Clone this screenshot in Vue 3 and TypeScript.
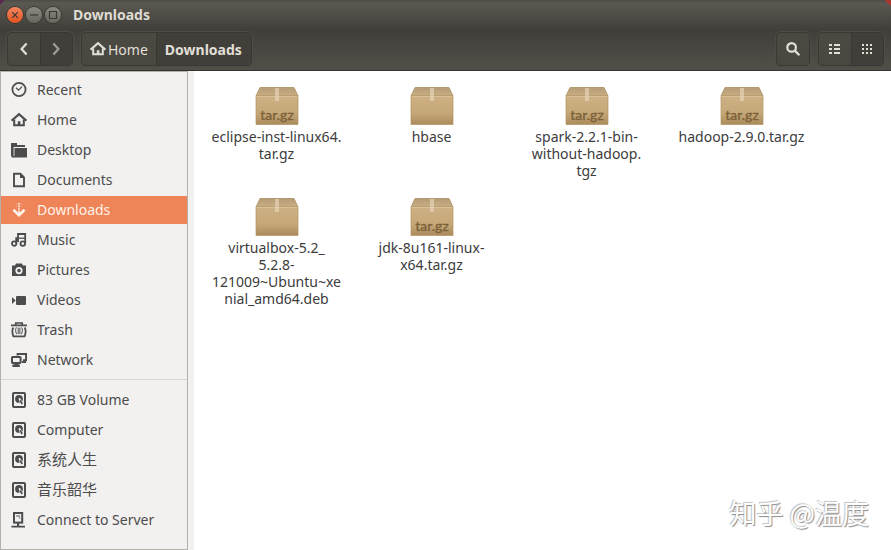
<script setup lang="ts">
import { ref } from 'vue'

interface Place {
  name: string
  icon: string
}

interface FileEntry {
  label: string
  badge?: string
}

const places: Place[] = [
  { name: 'Recent', icon: 'recent' },
  { name: 'Home', icon: 'home' },
  { name: 'Desktop', icon: 'desktop' },
  { name: 'Documents', icon: 'documents' },
  { name: 'Downloads', icon: 'downloads' },
  { name: 'Music', icon: 'music' },
  { name: 'Pictures', icon: 'pictures' },
  { name: 'Videos', icon: 'videos' },
  { name: 'Trash', icon: 'trash' },
  { name: 'Network', icon: 'network' },
]

const devices: Place[] = [
  { name: '83 GB Volume', icon: 'disk' },
  { name: 'Computer', icon: 'disk' },
  { name: '系统人生', icon: 'disk' },
  { name: '音乐韶华', icon: 'disk' },
  { name: 'Connect to Server', icon: 'server' },
]

const files: FileEntry[] = [
  { label: 'eclipse-inst-linux64.\ntar.gz', badge: 'tar.gz' },
  { label: 'hbase' },
  { label: 'spark-2.2.1-bin-\nwithout-hadoop.\ntgz', badge: 'tar.gz' },
  { label: 'hadoop-2.9.0.tar.gz', badge: 'tar.gz' },
  { label: 'virtualbox-5.2_\n5.2.8-\n121009~Ubuntu~xe\nnial_amd64.deb' },
  { label: 'jdk-8u161-linux-\nx64.tar.gz', badge: 'tar.gz' },
]

const groups: Place[][] = [places, devices]
const current = ref('Downloads')

const isHan = (text: string): boolean => /\p{Script=Han}/u.test(text)
</script>

<template>
  <div class="window">
    <svg class="defs" aria-hidden="true">
      <defs>
        <linearGradient id="box-front" x1="0" y1="0" x2="0" y2="1">
          <stop offset="0" stop-color="#cdb084" />
          <stop offset="0.6" stop-color="#c6a878" />
          <stop offset="1" stop-color="#ab8b5d" />
        </linearGradient>
        <linearGradient id="box-lid" x1="0" y1="0" x2="0" y2="1">
          <stop offset="0" stop-color="#b59c76" />
          <stop offset="1" stop-color="#c9ae84" />
        </linearGradient>
      </defs>
      <symbol id="recent" viewBox="0 0 16 16">
        <circle cx="8" cy="7.5" r="6.6" fill="none" stroke="currentColor" stroke-width="1.8" />
        <path d="M5 5.8 7.6 8.2 11 4.6" fill="none" stroke="currentColor" stroke-width="1.2" />
      </symbol>
      <symbol id="home" viewBox="0 0 16 16">
        <path d="M.6 8.6 8 2.2l7.4 6.4" fill="none" stroke="currentColor" stroke-width="2.1" />
        <path d="M3.2 7.5V13.2h9.6V7.5" fill="none" stroke="currentColor" stroke-width="2" />
        <path d="M6.8 9.2h2.6v4.6H6.8z" fill="currentColor" />
      </symbol>
      <symbol id="desktop" viewBox="0 0 16 16">
        <path d="M0 1h6v2h8v2H2.6v9H0z" fill="currentColor" />
        <path d="M3.4 6H16v9.6H.6V14h2.8z" fill="currentColor" />
      </symbol>
      <symbol id="documents" viewBox="0 0 16 16">
        <path d="M3 1.8h6.4L13 5.4v8.8H3z" fill="none" stroke="currentColor" stroke-width="1.9" />
        <path d="M9 2v4h4z" fill="currentColor" />
      </symbol>
      <symbol id="downloads" viewBox="0 0 16 16">
        <path d="M7.2 1h1.6v1.6H7.2zM7.2 3.6h1.6v1.6H7.2zM7.2 6.2h1.6v1.6H7.2zM7.2 8.6h1.6v4H7.2z" fill="currentColor" />
        <path d="M5.2 1h1v1.6h-1zM5.2 3.6h1v1.6h-1zM9.8 1h1v1.6h-1zM9.8 3.6h1v1.6h-1z" fill="currentColor" opacity="0.3" />
        <path d="M2.4 7.8 8 13.2l5.6-5.4" fill="none" stroke="currentColor" stroke-width="2.6" />
      </symbol>
      <symbol id="music" viewBox="0 0 16 16">
        <path d="M5.2 11.5V6.2h2M7 10V2h7.2v9.6" fill="none" stroke="currentColor" stroke-width="1.8" />
        <circle cx="3.2" cy="11.6" r="2.2" fill="none" stroke="currentColor" stroke-width="1.8" />
        <circle cx="11.8" cy="11.6" r="2.3" fill="none" stroke="currentColor" stroke-width="1.8" />
        <path d="M7 6.2h7" stroke="currentColor" stroke-width="1.3" />
      </symbol>
      <symbol id="pictures" viewBox="0 0 16 16">
        <path d="M1 3.6h3l1-2h6l1 2h3V14H1z" fill="currentColor" />
        <circle cx="8" cy="8.6" r="2.7" fill="currentColor" stroke="#f2f1f0" stroke-width="1.8" />
        <circle cx="8" cy="8.6" r="0.9" fill="currentColor" />
      </symbol>
      <symbol id="videos" viewBox="0 0 16 16">
        <rect x="5" y="4" width="10" height="9" rx="1" fill="currentColor" />
        <path d="M1 5v7l3.6-3.5z" fill="currentColor" />
      </symbol>
      <symbol id="trash" viewBox="0 0 16 16">
        <path d="M0 3.4h16M4.8 3V1h6.4v2" fill="none" stroke="currentColor" stroke-width="1.7" />
        <path d="M2.4 5.4C.6 8 1.2 11 2.4 14.4h11.2C14.8 11 15.4 8 13.6 5.4" fill="none" stroke="currentColor" stroke-width="1.8" />
        <path d="M5.4 5.4c-1.2 2-1 4 .2 6.8M10.6 5.4c1.2 2 1 4-.2 6.8M7.2 5.6V12M8.9 5.6V12" fill="none" stroke="currentColor" />
      </symbol>
      <symbol id="network" viewBox="0 0 16 16">
        <path d="M6.6 3.4V2h8.5v6.2H12" fill="none" stroke="currentColor" stroke-width="2" />
        <rect x="1" y="4.9" width="8.6" height="6" rx="0.6" fill="none" stroke="currentColor" stroke-width="2" />
        <path d="M3.4 11h4v1.6h1.4V15H1.4v-2.4h2zM11 9h4v2h-4z" fill="currentColor" />
      </symbol>
      <symbol id="disk" viewBox="0 0 16 16">
        <rect x="2" y="1" width="12" height="14" rx="1" fill="none" stroke="currentColor" stroke-width="2" />
        <circle cx="8" cy="6.9" r="3.9" fill="currentColor" />
        <path d="M7.6 6.2 9 6l3.4 5.4-3 1.8L8 8z" fill="#f2f1f0" />
        <path d="M9.2 8.4 11.2 12" stroke="currentColor" stroke-width="1.7" />
      </symbol>
      <symbol id="server" viewBox="0 0 16 16">
        <rect x="3" y="1" width="8.2" height="9.6" fill="none" stroke="currentColor" stroke-width="2" />
        <path d="M5.2 4h3.8M8 6h1.2" stroke="currentColor" />
        <path d="M6 11h2.2v3H6zM.4 13.8H14v1.8H.4z" fill="currentColor" />
      </symbol>
    </svg>

    <header class="titlebar">
      <button class="control close" aria-label="Close">
        <svg viewBox="0 0 16 16"><path d="m5.2 5.2 5.6 5.6m0-5.6-5.6 5.6" /></svg>
      </button>
      <button class="control" aria-label="Minimize">
        <svg viewBox="0 0 16 16"><path d="M4 8h8" /></svg>
      </button>
      <button class="control" aria-label="Maximize">
        <svg viewBox="0 0 16 16"><path d="M4.5 4.5h7v7h-7z" /></svg>
      </button>
      <h1 class="title">Downloads</h1>
    </header>

    <nav class="toolbar">
      <div class="group">
        <button class="tool" aria-label="Back">
          <svg viewBox="0 0 16 16"><path d="M10.6 2.6 5.6 8l5 5.4" /></svg>
        </button>
        <button class="tool pressed dim" aria-label="Forward">
          <svg viewBox="0 0 16 16"><path d="m5.4 2.6 5 5.4-5 5.4" /></svg>
        </button>
      </div>
      <div class="group">
        <button class="tool crumb">
          <svg><use href="#home" /></svg>Home
        </button>
        <button class="tool crumb pressed active">Downloads</button>
      </div>
      <div class="group search">
        <button class="tool" aria-label="Search">
          <svg viewBox="0 0 16 16">
            <circle cx="6.6" cy="6.4" r="4.3" /><path d="m9.8 9.6 4.6 4.6" />
          </svg>
        </button>
      </div>
      <div class="group">
        <button class="tool" aria-label="List view">
          <svg viewBox="0 0 16 16" class="solid">
            <path d="M2 3h3v2H2zM2 7h3v2H2zM2 11h3v2H2zM7 3h6v2H7zM7 7h6v2H7zM7 11h6v2H7z" />
          </svg>
        </button>
        <button class="tool pressed" aria-label="Icon view">
          <svg viewBox="0 0 16 16" class="solid">
            <path d="M3 3h2v2H3zM7 3h2v2H7zM11 3h2v2h-2zM3 7h2v2H3zM7 7h2v2H7zM11 7h2v2h-2zM3 11h2v2H3zM7 11h2v2H7zM11 11h2v2h-2z" />
          </svg>
        </button>
      </div>
    </nav>

    <div class="content">
      <aside class="sidebar">
        <ul v-for="(group, index) in groups" :key="index" class="places">
          <li v-for="place in group" :key="place.name">
            <a
              href="#"
              class="place"
              :class="{ selected: place.name === current }"
              @click.prevent="current = place.name"
            >
              <svg class="place-icon"><use :href="'#' + place.icon" /></svg>
              <span class="place-name" :class="{ han: isHan(place.name) }">{{ place.name }}</span>
            </a>
          </li>
        </ul>
      </aside>

      <main class="files">
        <figure v-for="file in files" :key="file.label" class="file">
          <svg class="box" viewBox="0 0 44 38">
            <path d="M5 .5h34l4 8.5H1z" fill="url(#box-lid)" stroke="#b39a70" />
            <path d="M1 9h42v28.5H1z" fill="url(#box-front)" stroke="#b0945f" stroke-opacity="0.7" />
            <path d="M1.5 9.5h41" stroke="#dac096" />
            <path d="M20 1h4v13h-4z" fill="#e7d3b5" opacity="0.7" />
            <text v-if="file.badge" x="22" y="33" class="badge">{{ file.badge }}</text>
          </svg>
          <figcaption>{{ file.label }}</figcaption>
        </figure>
      </main>
      <p class="watermark">知乎 @温度</p>
    </div>
  </div>
</template>

<style>
body {
  background: #f2f1f0;
}
</style>

<style scoped>
.window {
  display: flex;
  flex-direction: column;
  min-height: 100vh;
  font: 14px/17px "Noto Sans", "Noto Sans CJK SC", sans-serif;
  color: #3c3c3c;
}

.defs {
  position: absolute;
  width: 0;
  height: 0;
}

button {
  margin: 0;
  padding: 0;
  border: 0;
  background: none;
  font: inherit;
  color: inherit;
}

.titlebar {
  display: flex;
  align-items: center;
  gap: 3px;
  height: 30px;
  padding-left: 7px;
  background:
    linear-gradient(135deg, #5b2a50 3px, transparent 4px),
    linear-gradient(225deg, #a8382c 4px, transparent 5px),
    linear-gradient(#4c4b45, #5a5850 3px, #403f3a);
}

.control {
  width: 16px;
  height: 16px;
  border-radius: 50%;
  background: linear-gradient(#8b8980, #67655d);
  box-shadow: 0 0 0 1px #393833;
}

.control.close {
  background: linear-gradient(#f58561, #e2541f);
}

.control svg {
  display: block;
  fill: none;
  stroke: #3a3934;
  stroke-width: 1.2;
}

.title {
  margin: 0 0 0 9px;
  font-size: 14px;
  line-height: 20px;
  font-weight: 700;
  color: #dfdbd2;
}

.toolbar {
  display: flex;
  align-items: center;
  gap: 8px;
  height: 41px;
  box-sizing: border-box;
  padding: 0 7px 2px;
  background: linear-gradient(#403f3a, #504f48);
  border-bottom: 1px solid #34332f;
}

.group {
  display: flex;
  height: 34px;
  box-sizing: border-box;
  border: 1px solid #393833;
  border-radius: 5px;
  overflow: hidden;
  box-shadow: 0 0 0 1px #4d4c45;
  background: linear-gradient(#4a4942, #484740);
}

.search {
  margin-left: auto;
}

.tool {
  display: flex;
  align-items: center;
  justify-content: center;
  width: 32px;
  color: #e2dfd7;
}

.tool.pressed {
  background: #403f39;
  box-shadow: inset 1px 0 #383732;
}

.tool.dim {
  color: #a09e95;
}

.tool svg {
  width: 16px;
  height: 16px;
  fill: none;
  stroke: currentColor;
  stroke-width: 2.2;
}

.tool svg.solid {
  fill: currentColor;
  stroke: none;
}

.tool.crumb {
  width: auto;
  padding: 0 8px;
}

.crumb svg {
  margin-right: 2px;
  stroke: none;
}

.tool.crumb.active {
  padding: 0 9px;
  font-weight: 700;
}

.content {
  position: relative;
  display: flex;
  flex: 1;
  gap: 6px;
}

.sidebar {
  width: 188px;
  box-sizing: border-box;
  padding-top: 4px;
  border: 1px solid #b4b0ab;
  background: #f2f1f0;
}

.places {
  display: grid;
  gap: 2px;
  margin: 0;
  padding: 0;
  list-style: none;
}

.places + .places {
  margin-top: 5px;
  padding-top: 6px;
  border-top: 1px solid #d9d6d3;
}

.place {
  display: flex;
  align-items: center;
  gap: 10px;
  height: 28px;
  padding-left: 10px;
  color: #4c4c4c;
  text-decoration: none;
}

.place.selected {
  background: #f08459;
  color: #fff3ea;
}

.place-icon {
  width: 16px;
  height: 16px;
}

.place-name {
  padding-bottom: 2px;
}

.place-name.han {
  font-size: 15px;
}

.files {
  flex: 1;
  display: grid;
  grid-template-columns: repeat(auto-fill, 155px);
  align-content: start;
  gap: 19px 0;
  padding: 16px 0 16px 5px;
  background: #fff;
}

.file {
  display: flex;
  flex-direction: column;
  align-items: center;
  gap: 3px;
  margin: 0;
}

.box {
  width: 44px;
  height: 38px;
}

.badge {
  font: 14px "Lato", sans-serif;
  fill: #7a6038;
  stroke: #7a6038;
  stroke-width: 0.3px;
  text-anchor: middle;
}

figcaption {
  white-space: pre-line;
  text-align: center;
}

.watermark {
  position: absolute;
  right: 22px;
  bottom: 17px;
  margin: 0;
  font: 27px/40px "Noto Sans CJK SC", sans-serif;
  color: #fff;
  text-shadow: 1px 1px 1px #8a8a8a, -1px -1px 1px #c4c4c4;
}
</style>
